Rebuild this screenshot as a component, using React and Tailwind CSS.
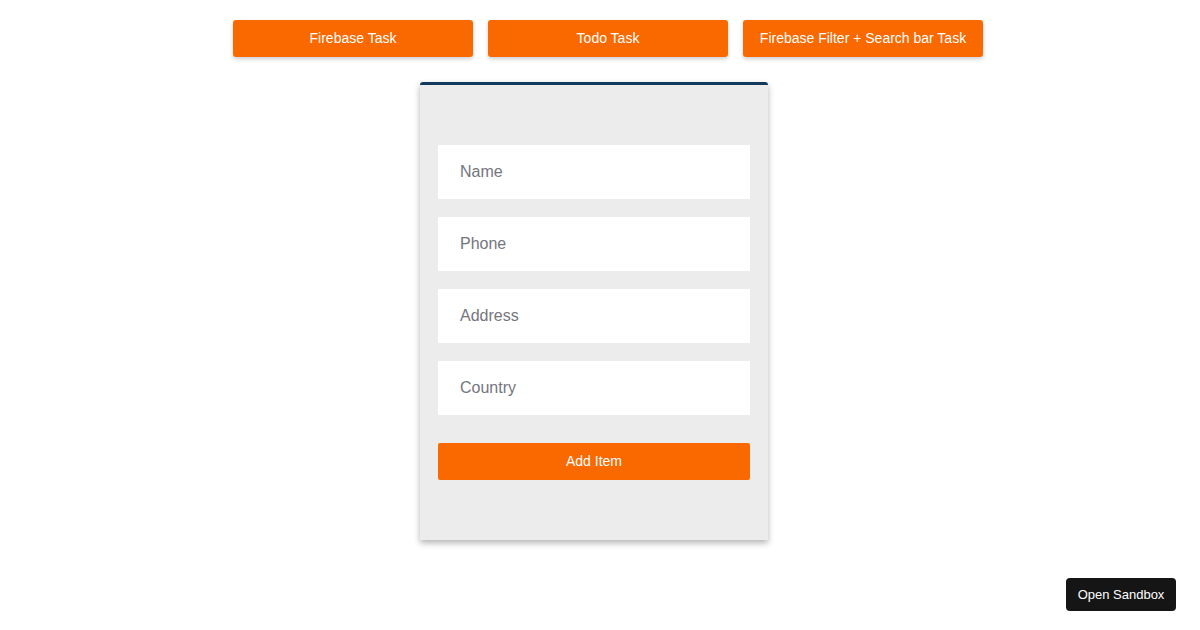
const tabs = ["Firebase Task", "Todo Task", "Firebase Filter + Search bar Task"];
const fields = ["Name", "Phone", "Address", "Country"];

const App = () => {
  return (
    <div className="relative min-h-[630px] bg-white font-['Liberation_Sans',Arial,sans-serif]">
      {/* top nav buttons */}
      <div className="flex justify-center gap-[15px] pt-5 pl-4">
        {tabs.map((t) => (
          <button
            key={t}
            className="w-[240px] h-[37px] rounded-[3px] bg-[#fa6900] text-white text-[14px] shadow-[0_2px_4px_rgba(0,0,0,0.2)]"
          >
            {t}
          </button>
        ))}
      </div>

      {/* form card */}
      <div className="flex justify-center mt-[25px] pr-3">
        <div className="w-[348px] bg-[#ececec] border-t-[3px] border-[#123a5c] rounded-t-[3px] px-[18px] pt-[60px] pb-[60px] shadow-[0_3px_6px_rgba(0,0,0,0.3)]">
          <div className="flex flex-col gap-[18px]">
            {fields.map((f) => (
              <input
                key={f}
                type="text"
                placeholder={f}
                className="w-full h-[54px] bg-white px-[22px] text-[16px] text-gray-800 placeholder:text-[#75757d] outline-none"
              />
            ))}
          </div>
          <button className="mt-[28px] w-full h-[37px] rounded-[2px] bg-[#fa6900] text-white text-[14px]">
            Add Item
          </button>
        </div>
      </div>

      {/* sandbox badge */}
      <button className="absolute right-6 bottom-[19px] w-[110px] h-[33px] rounded-[4px] bg-[#151515] text-white text-[13px]">
        Open Sandbox
      </button>
    </div>
  );
};

export default App;
